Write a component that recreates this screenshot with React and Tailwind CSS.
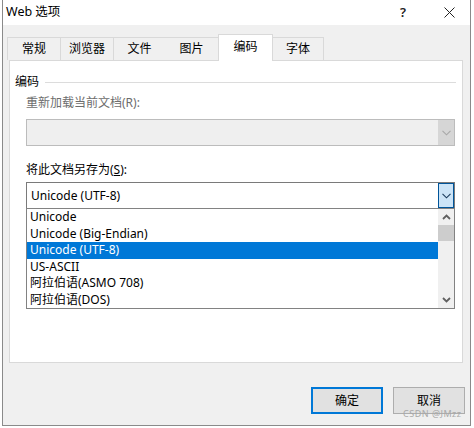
const FONT = { fontFamily: '"Noto Sans", "Noto Sans CJK SC", sans-serif' };

function Chevron({ color = '#333', className = '' }) {
  return (
    <svg width="9" height="6" viewBox="0 0 9 6" className={className}>
      <polyline points="0.5,0.8 4.5,4.8 8.5,0.8" fill="none" stroke={color} strokeWidth="1.1" />
    </svg>
  );
}

function Caret({ up }) {
  return (
    <svg width="9" height="6" viewBox="0 0 9 6">
      <polyline
        points={up ? '1,5 4.5,1.5 8,5' : '1,1 4.5,4.5 8,1'}
        fill="none"
        stroke="#606060"
        strokeWidth="1.8"
      />
    </svg>
  );
}

const tabs = ['常规', '浏览器', '文件', '图片', '编码', '字体'];
const tabWidths = ['w-[53px]', 'w-[53px]', 'w-[52px]', 'w-[53px]', 'w-[55px]', 'w-[51px]'];

const items = [
  'Unicode',
  'Unicode (Big-Endian)',
  'Unicode (UTF-8)',
  'US-ASCII',
  '阿拉伯语(ASMO 708)',
  '阿拉伯语(DOS)',
];

export default function App() {
  return (
    <div className="relative w-[474px] h-[428px] bg-white overflow-hidden text-[12px] text-black" style={FONT}>
      <div className="ml-[2px] w-[469px] h-[426px] flex flex-col bg-[#f0f0f0] border-l border-r border-b border-[#8a8a8a]">
        {/* Title bar */}
        <div className="h-[25px] bg-white flex items-center pl-[3px] shrink-0">
          <span className="text-[12.5px] leading-none">Web 选项</span>
          <div className="flex-1" />
          <span className="text-[13px] leading-none mr-[38px] font-semibold text-[#222]">?</span>
          <svg width="11" height="11" viewBox="0 0 11 11" className="mr-[15px]">
            <path d="M0.5 0.5 L10.5 10.5 M10.5 0.5 L0.5 10.5" stroke="#222" strokeWidth="1" />
          </svg>
        </div>

        {/* Tabs */}
        <div className="mt-[9px] pl-[4px] h-[26px] flex items-end relative z-10">
          {tabs.map((t, i) => {
            const sel = i === 4;
            return (
              <div
                key={t}
                className={`${tabWidths[i]} flex items-center justify-center border-[#d9d9d9] ${
                  sel
                    ? 'h-[27px] -mb-px bg-white border-l border-t border-r pb-[2px]'
                    : `h-[23px] bg-[#f0f0f0] border-t ${i === 5 ? 'border-r' : ''} ${i === 3 ? '' : 'border-l'} ${i === 5 ? 'border-l-0' : ''}`
                }`}
              >
                {t}
              </div>
            );
          })}
        </div>

        {/* Panel */}
        <div className="ml-[6px] w-[454px] h-[303px] bg-white border border-[#d9d9d9] flex flex-col shrink-0">
          <div className="mt-[13px] h-[16px] flex items-center pl-[5px] pr-[6px]">
            <span>编码</span>
            <div className="flex-1 h-px bg-[#dcdcdc] ml-[6px]" />
          </div>
          <div className="mt-[5px] h-[16px] flex items-center pl-[16px] text-[#6d6d6d]">重新加载当前文档(R):</div>
          <div className="mt-[8px] ml-[16px] w-[429px] h-[27px] flex border border-[#bcbcbc] bg-[#efefef]">
            <div className="flex-1" />
            <div className="w-[16px] bg-[#d6d6d6] flex items-center justify-center">
              <Chevron color="#a8a8a8" />
            </div>
          </div>
          <div className="mt-[16px] h-[16px] flex items-center pl-[16px]">
            将此文档另存为(<span className="underline">S</span>):
          </div>
          <div className="mt-[4px] ml-[16px] w-[429px] h-[27px] flex border border-[#7a7a7a] bg-white">
            <div className="flex-1 flex items-center pl-[4px]">Unicode (UTF-8)</div>
            <div className="w-[16px] bg-[#cce4f7] border border-[#005499] flex items-center justify-center">
              <Chevron color="#1a3b5c" />
            </div>
          </div>
          <div className="-mt-px ml-[16px] w-[429px] h-[101px] flex border border-[#828282] bg-white">
            <div className="flex-1 flex flex-col">
              {items.map((it, i) => (
                <div
                  key={it}
                  className={`h-[16.5px] flex items-center pl-[3px] leading-none ${
                    i === 2 ? 'bg-[#0078d7] text-white' : ''
                  }`}
                >
                  {it}
                </div>
              ))}
            </div>
            <div className="w-[16px] flex flex-col bg-[#f0f0f0]">
              <div className="h-[16px] flex items-center justify-center">
                <Caret up />
              </div>
              <div className="h-[16px] bg-[#cdcdcd]" />
              <div className="flex-1" />
              <div className="h-[16px] flex items-center justify-center">
                <Caret />
              </div>
            </div>
          </div>
        </div>

        {/* Buttons */}
        <div className="mt-[24px] flex justify-end pr-[5px] gap-[10px]">
          <div className="w-[72px] h-[27px] bg-[#e1e1e1] border-2 border-[#0078d7] flex items-center justify-center">
            确定
          </div>
          <div className="w-[72px] h-[27px] bg-[#e1e1e1] border border-[#adadad] flex items-center justify-center">
            取消
          </div>
        </div>
      </div>

      <div className="absolute left-[403px] top-[409px] text-[9px] leading-none text-[#a8a8a8] tracking-[0.5px]">
        CSDN @JMzz
      </div>
    </div>
  );
}
